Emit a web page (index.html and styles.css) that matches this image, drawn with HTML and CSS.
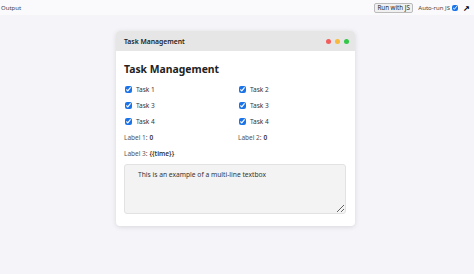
FILE: index.html
```html
<!DOCTYPE html>
<html>
<head>
<meta charset="utf-8">
<link rel="stylesheet" href="styles.css">
</head>
<body>
<div class="topbar">
  <span class="out">Output</span>
  <span class="spacer"></span>
  <button class="run">Run with JS</button>
  <label class="auto">Auto-run JS <input type="checkbox" checked></label>
  <span class="pop">&#x2197;</span>
</div>
<div class="stage">
  <div class="card">
    <div class="titlebar">
      <span class="ttl">Task Management</span>
      <span class="dots"><i class="d red"></i><i class="d yel"></i><i class="d grn"></i></span>
    </div>
    <div class="body">
      <h1 class="heading">Task Management</h1>
      <div class="grid">
        <label class="item"><input type="checkbox" checked>Task 1</label>
        <label class="item"><input type="checkbox" checked>Task 2</label>
        <label class="item"><input type="checkbox" checked>Task 3</label>
        <label class="item"><input type="checkbox" checked>Task 3</label>
        <label class="item"><input type="checkbox" checked>Task 4</label>
        <label class="item"><input type="checkbox" checked>Task 4</label>
        <div class="lbl">Label 1: <b>0</b></div>
        <div class="lbl">Label 2: <b>0</b></div>
        <div class="lbl">Label 3: <b>{{time}}</b></div>
      </div>
      <textarea class="ta">This is an example of a multi-line textbox</textarea>
    </div>
  </div>
</div>
</body>
</html>
```
FILE: styles.css
```css
html, body { margin: 0; padding: 0; }
body {
  background: #f4f4f9;
  font-family: "Noto Sans", "Open Sans", sans-serif;
  width: 474px; height: 274px; overflow: hidden;
}
.topbar {
  display: flex; align-items: center;
  height: 15px;
  background: #fafafc;
  font-size: 6px; color: #444;
}
.out { padding-left: 1px; }
.spacer { flex: 1; }
.run {
  font-family: inherit; font-size: 6.2px; color: #222;
  height: 10px; padding: 0 2.5px; margin: 0 5px 0 0;
  border: 1px solid #bbb; border-radius: 2px; background: #f0f0f0;
  line-height: 8px;
}
.auto { display: flex; align-items: center; color: #444; }
.auto input { width: 6px; height: 6px; margin: 0 0 0 2px; accent-color: #1a73e8; }
.pop { font-size: 8px; margin: 0 4px 0 5px; color: #000; font-weight: bold; }
.stage { display: flex; justify-content: center; padding-top: 16px; padding-right: 3px; }
.card {
  width: 239px; background: #fff; border-radius: 4px;
  box-shadow: 0 1px 5px rgba(0,0,0,0.12);
  overflow: hidden;
}
.titlebar {
  height: 20px; background: #e6e6e6;
  display: flex; align-items: center; padding: 0 6px 0 8px;
}
.ttl { font-size: 6.8px; font-weight: 600; color: #222; flex: 1; }
.dots { display: flex; gap: 4px; }
.d { width: 5px; height: 5px; border-radius: 50%; display: block; }
.red { background: #f25d5d; }
.yel { background: #f8b93c; }
.grn { background: #33c748; }
.body { padding: 8px 8px 12px 8px; }
.heading { margin: 2px 0 4px 0; font-size: 10.4px; font-weight: 700; color: #222; line-height: 16px; }
.grid { display: grid; grid-template-columns: 1fr 1fr; column-gap: 5px; }
.item, .lbl { height: 16px; display: flex; align-items: center; font-size: 6.5px; color: #333; }
.lbl { color: #555; }
.lbl b { color: #333; font-weight: 600; margin-left: 2px; }
.item input { width: 7px; height: 7px; margin: 0 4px 0 1px; accent-color: #1a73e8; }
.ta {
  display: block; box-sizing: border-box;
  width: 222px; height: 50px; margin-top: 3px;
  background: #f3f3f3; border: 1px solid #e2e2e2; border-radius: 3px;
  font-family: inherit; font-size: 6.7px; color: #333;
  padding: 5px 13px;
}
```
